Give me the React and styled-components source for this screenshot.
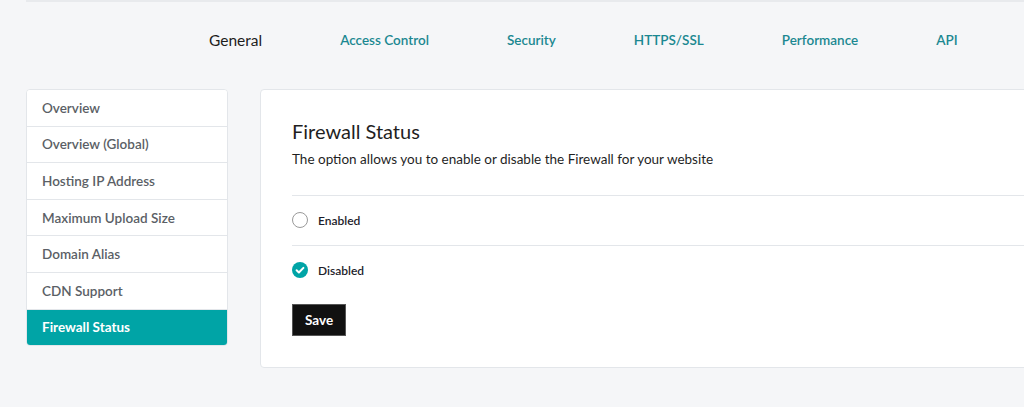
import styled, { createGlobalStyle } from 'styled-components';

const GlobalStyle = createGlobalStyle`
  html, body {
    margin: 0;
    padding: 0;
    background: #f5f6f8;
    overflow: hidden;
  }
  body {
    font-family: Lato, "Liberation Sans", Arial, sans-serif;
  }
`;

const Page = styled.div`
  margin-left: 26px;
  width: 1100px;
  border-top: 2px solid #e8eaed;
`;

const Tabs = styled.nav`
  display: flex;
  align-items: center;
  gap: 78px;
  height: 76px;
  padding-left: 183px;
  margin-bottom: 11px;
`;

const Tab = styled.a`
  font-size: ${(p) => (p.$active ? '15.5px' : '13.5px')};
  font-weight: ${(p) => (p.$active ? 400 : 600)};
  color: ${(p) => (p.$active ? '#1d1d1d' : '#1b8891')};
  text-decoration: none;
  cursor: pointer;
`;

const Body = styled.div`
  display: flex;
  align-items: flex-start;
  gap: 32px;
`;

const Sidebar = styled.ul`
  list-style: none;
  margin: 0;
  padding: 0;
  width: 200px;
  background: #fff;
  border: 1px solid #e3e6ea;
  border-radius: 4px;
  overflow: hidden;
`;

const SideItem = styled.li`
  height: 35.6px;
  display: flex;
  align-items: center;
  padding-left: 15px;
  font-size: 13.5px;
  font-weight: ${(p) => (p.$active ? 700 : 600)};
  color: ${(p) => (p.$active ? '#fff' : '#5b5f66')};
  background: ${(p) => (p.$active ? '#00a4a6' : '#fff')};
  & + & {
    border-top: 1px solid #e3e6ea;
  }
`;

const Panel = styled.section`
  flex: 1;
  box-sizing: border-box;
  height: 279px;
  background: #fff;
  border: 1px solid #e3e6ea;
  border-radius: 4px;
  padding: 29px 0 30px 31px;
`;

const Title = styled.h2`
  margin: 0;
  font-size: 20px;
  font-weight: 400;
  color: #1f1f1f;
  line-height: 24px;
`;

const Desc = styled.p`
  margin: 7px 0 0;
  font-size: 13.5px;
  color: #1f1f1f;
  line-height: 18px;
`;

const Options = styled.div`
  margin-top: 27px;
  border-top: 1px solid #e3e6ea;
`;

const Option = styled.label`
  display: flex;
  align-items: center;
  gap: 10px;
  height: 48px;
  padding-bottom: 1px;
  font-size: 12px;
  font-weight: 600;
  color: #1d1d2b;
  & + & {
    border-top: 1px solid #e3e6ea;
  }
`;

const Circle = styled.span`
  width: 14px;
  height: 14px;
  border-radius: 50%;
  border: 1px solid #9a9a9a;
  display: inline-block;
`;

const Check = () => (
  <svg width="16" height="16" viewBox="0 0 16 16">
    <circle cx="8" cy="8" r="8" fill="#00a4a6" />
    <path d="M4.6 8.2l2.3 2.3 4.5-4.6" fill="none" stroke="#fff" strokeWidth="2" strokeLinecap="round" strokeLinejoin="round" />
  </svg>
);

const SaveButton = styled.button`
  margin-top: 9px;
  height: 32px;
  padding: 0 12px;
  background: #111;
  color: #fff;
  border: 1px solid #555;
  font-family: inherit;
  font-size: 13.5px;
  font-weight: 700;
  cursor: pointer;
`;

const tabs = ['General', 'Access Control', 'Security', 'HTTPS/SSL', 'Performance', 'API'];

const menu = [
  'Overview',
  'Overview (Global)',
  'Hosting IP Address',
  'Maximum Upload Size',
  'Domain Alias',
  'CDN Support',
  'Firewall Status',
];

const App = () => {
  return (
    <>
      <GlobalStyle />
      <Page>
        <Tabs>
          {tabs.map((t, i) => (
            <Tab key={t} $active={i === 0}>{t}</Tab>
          ))}
        </Tabs>
        <Body>
          <Sidebar>
            {menu.map((m) => (
              <SideItem key={m} $active={m === 'Firewall Status'}>{m}</SideItem>
            ))}
          </Sidebar>
          <Panel>
            <Title>Firewall Status</Title>
            <Desc>The option allows you to enable or disable the Firewall for your website</Desc>
            <Options>
              <Option>
                <Circle />
                Enabled
              </Option>
              <Option>
                <Check />
                Disabled
              </Option>
            </Options>
            <SaveButton>Save</SaveButton>
          </Panel>
        </Body>
      </Page>
    </>
  );
};

export default App;
